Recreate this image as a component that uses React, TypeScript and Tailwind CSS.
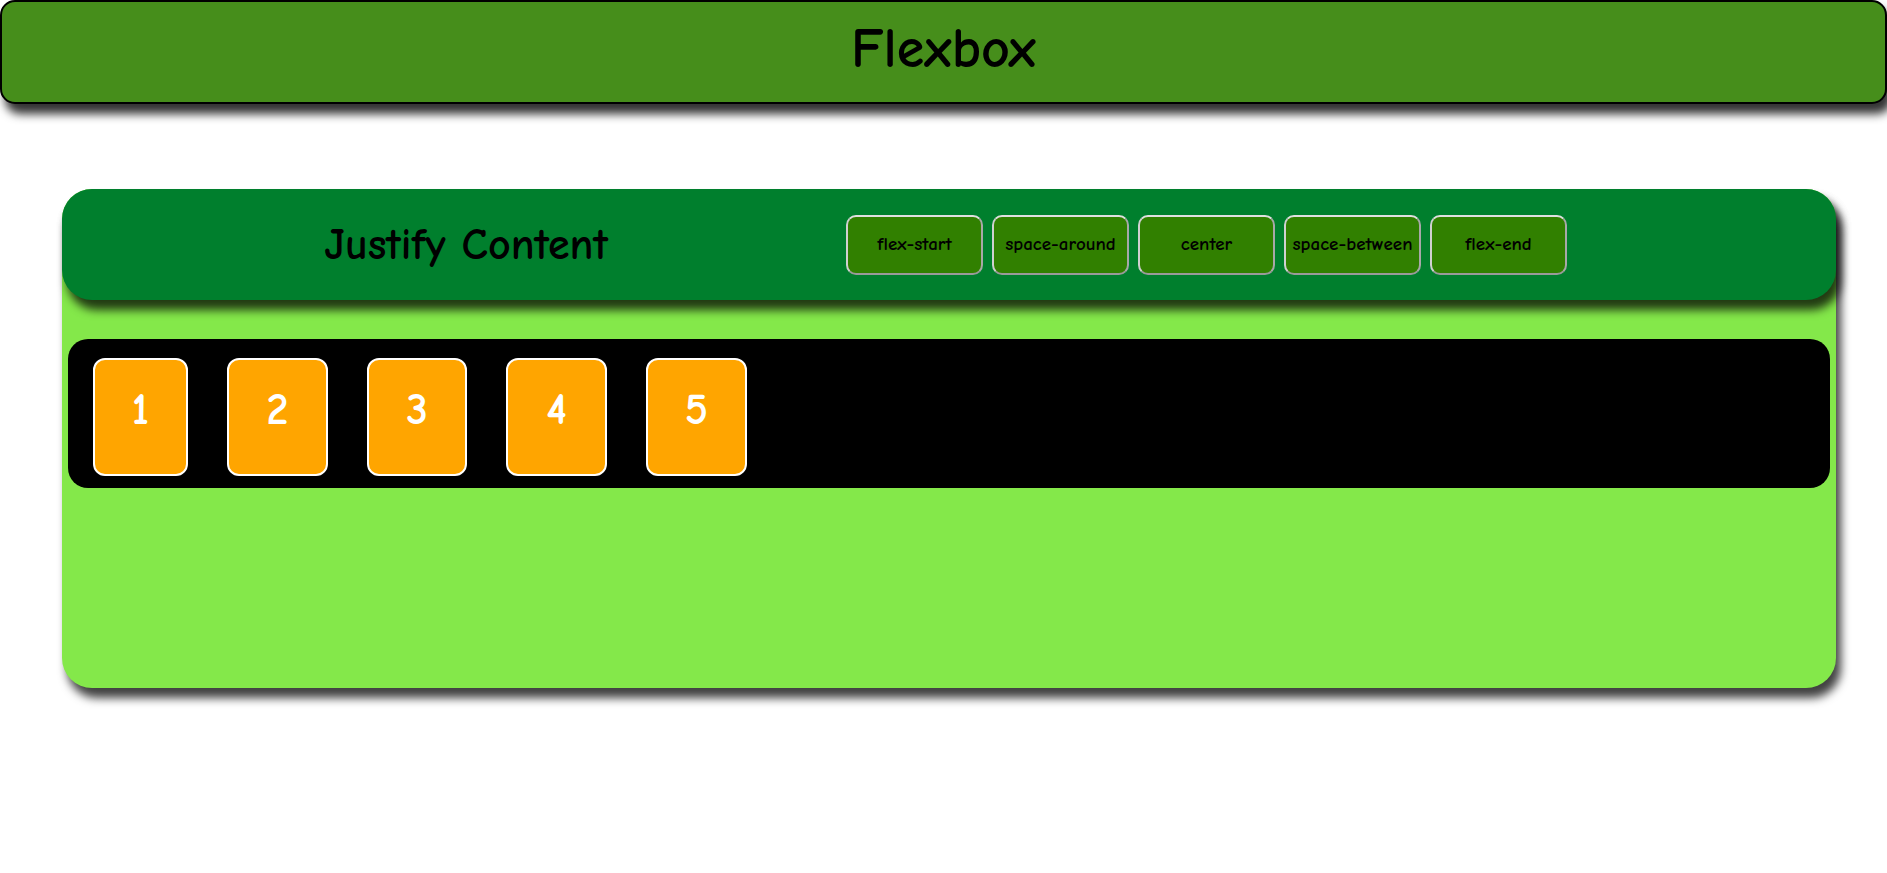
import React from "react";

const modes = ["flex-start", "space-around", "center", "space-between", "flex-end"];

const items = [
  { label: "1", w: "w-[95px]" },
  { label: "2", w: "w-[101px]" },
  { label: "3", w: "w-[100px]" },
  { label: "4", w: "w-[101px]" },
  { label: "5", w: "w-[101px]" },
];

export default function App() {
  return (
    <div className="min-h-[873px] bg-white font-['Comic_Sans_MS','Comic_Neue',cursive] text-black">
      {/* page header */}
      <header className="flex h-[104px] w-full items-center justify-center rounded-[15px] border-2 border-black bg-[#468e1b] shadow-[5px_10px_10px_rgba(0,0,0,0.8)]">
        <h1 className="-mt-[6px] text-[56px] font-semibold leading-none">Flexbox</h1>
      </header>

      {/* demo card */}
      <section className="ml-[62px] mt-[85px] h-[499px] w-[1774px] rounded-[30px] bg-[#84e84a] shadow-[5px_10px_10px_rgba(0,0,0,0.75)]">
        <div className="flex h-[111px] items-center rounded-[30px] bg-[#007f2d] shadow-[5px_10px_10px_rgba(0,0,0,0.75)]">
          <div className="flex w-[784px] justify-center pl-[24px]">
            <h2 className="text-[44px] font-semibold leading-none">Justify Content</h2>
          </div>
          <div className="flex gap-[9px]">
            {modes.map((m) => (
              <button
                key={m}
                className="flex h-[60px] w-[137px] items-center justify-center rounded-[10px] border-2 border-t-[#e0e0e0] border-l-[#d0d0d0] border-r-[#a8a8a8] border-b-[#9a9a9a] bg-[#318000] text-[19px] font-semibold text-black"
              >
                {m}
              </button>
            ))}
          </div>
        </div>

        <div className="mx-[6px] mt-[39px] flex h-[149px] gap-[39px] rounded-[20px] bg-black pl-[25px] pt-[19px]">
          {items.map((it) => (
            <div
              key={it.label}
              className={`flex h-[118px] ${it.w} items-center justify-center rounded-[12px] border-2 border-white bg-[#ffa500] pb-[14px] text-[44px] font-semibold leading-none text-white`}
            >
              {it.label}
            </div>
          ))}
        </div>
      </section>
    </div>
  );
}
